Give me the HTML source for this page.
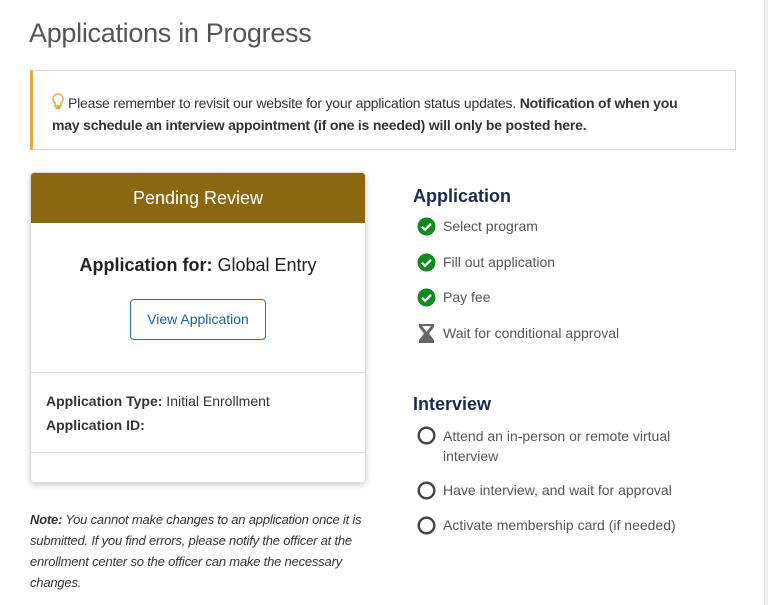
<!DOCTYPE html>
<html><head><style>
body{margin:0;width:768px;height:605px;background:#fff;font-family:"Liberation Sans",sans-serif;position:relative;overflow:hidden;color:#333}
.a{position:absolute}
h1{position:absolute;left:29px;top:18px;margin:0;font-weight:normal;font-size:27px;color:#555;letter-spacing:-0.3px}
.notice{left:30px;top:70px;width:706px;height:80px;border:1px solid #d4d4d4;border-left:3px solid #ddab3e;box-sizing:border-box}
.notice p{margin:0;position:absolute;left:19px;top:21px;font-size:14px;line-height:22px;color:#333;width:645px;letter-spacing:-0.2px}
.card{left:30px;top:172px;width:336px;height:311px;border:1px solid #ddd;border-radius:4px;box-shadow:0 2px 6px rgba(0,0,0,.2);overflow:hidden;box-sizing:border-box}
.hdr{height:50px;background:#8b6712;color:#fff;font-size:18px;text-align:center;line-height:50px}
.item{position:absolute;left:443px;font-size:14px;color:#555}
.ic{position:absolute;left:417px}
.hd{font-size:18px;font-weight:bold;color:#1b2a4e}
</style></head><body>
<h1>Applications in Progress</h1>
<div class="a notice"><p><svg width="12" height="17" viewBox="0 0 12 17" style="vertical-align:-2px;margin-right:4px"><path d="M6 1a5 5 0 0 0-3 9v3h6v-3a5 5 0 0 0-3-9z" fill="none" stroke="#ddab3e" stroke-width="1.5"/><rect x="3.5" y="13" width="5" height="3" fill="#ddab3e"/></svg>Please remember to revisit our website for your application status updates. <b>Notification of when you may schedule an interview appointment (if one is needed) will only be posted here.</b></p></div>
<div class="a card"><div class="hdr">Pending Review</div>
<div class="a" style="left:0;top:82px;width:334px;text-align:center;font-size:18px;color:#222"><b style="font-weight:600">Application for:</b> Global Entry</div>
<div class="a" style="left:99px;top:126px;width:136px;height:41px;border:1.5px solid #2a6fb0;border-radius:4px;box-sizing:border-box;text-align:center;line-height:39px;color:#1e5f9e;font-size:14px">View Application</div>
<div class="a" style="left:0;top:199px;width:334px;border-top:1px solid #ddd"></div>
<div class="a" style="left:15px;top:216px;font-size:14px;line-height:24px;color:#333"><b>Application Type:</b> Initial Enrollment<br><b>Application ID:</b></div>
<div class="a" style="left:0;top:279px;width:334px;border-top:1px solid #ddd"></div>
</div>
<div class="a" style="left:30px;top:509px;width:340px;font-size:13px;line-height:21px;font-style:italic;color:#333;letter-spacing:-0.2px"><b>Note:</b> You cannot make changes to an application once it is submitted. If you find errors, please notify the officer at the enrollment center so the officer can make the necessary changes.</div>
<div class="a hd" style="left:413px;top:186px">Application</div>
<svg class="ic" style="top:217px" width="19" height="19"><circle cx="9.5" cy="9.5" r="9" fill="#138a1e"/><path d="M5 9.8l3 3 6-6" stroke="#fff" stroke-width="2.3" fill="none"/></svg>
<div class="item" style="top:218px">Select program</div>
<svg class="ic" style="top:253px" width="19" height="19"><circle cx="9.5" cy="9.5" r="9" fill="#138a1e"/><path d="M5 9.8l3 3 6-6" stroke="#fff" stroke-width="2.3" fill="none"/></svg>
<div class="item" style="top:254px">Fill out application</div>
<svg class="ic" style="top:288px" width="19" height="19"><circle cx="9.5" cy="9.5" r="9" fill="#138a1e"/><path d="M5 9.8l3 3 6-6" stroke="#fff" stroke-width="2.3" fill="none"/></svg>
<div class="item" style="top:289px">Pay fee</div>
<svg class="ic" style="top:323px" width="19" height="21"><path d="M2 1h15v3l-5 6.5 5 6.5v3H2v-3l5-6.5L2 4z" fill="#666"/><path d="M5 3h9l-4.5 6z" fill="#fff"/></svg>
<div class="item" style="top:325px">Wait for conditional approval</div>
<div class="a hd" style="left:413px;top:394px">Interview</div>
<svg class="ic" style="top:426px" width="19" height="19"><circle cx="9.5" cy="9.5" r="7.8" fill="none" stroke="#444" stroke-width="2.4"/></svg>
<div class="item" style="top:426px;line-height:20px;width:260px">Attend an in-person or remote virtual interview</div>
<svg class="ic" style="top:481px" width="19" height="19"><circle cx="9.5" cy="9.5" r="7.8" fill="none" stroke="#444" stroke-width="2.4"/></svg>
<div class="item" style="top:482px">Have interview, and wait for approval</div>
<svg class="ic" style="top:516px" width="19" height="19"><circle cx="9.5" cy="9.5" r="7.8" fill="none" stroke="#444" stroke-width="2.4"/></svg>
<div class="item" style="top:517px">Activate membership card (if needed)</div>
<div class="a" style="left:764px;top:0;width:4px;height:605px;background:#f0f0f0;border-left:1px solid #ddd"></div>
</body></html>
